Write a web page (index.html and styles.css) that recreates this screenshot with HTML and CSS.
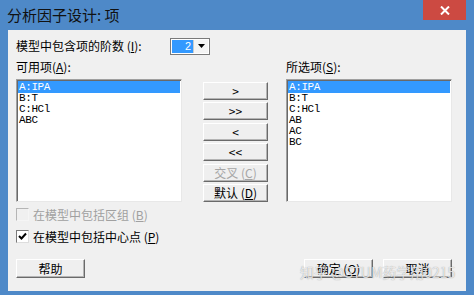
FILE: index.html
```html
<!DOCTYPE html>
<html>
<head>
	<title>分析因子设计: 项</title>
	<link rel="stylesheet" href="styles.css">
</head>
<body>
	<div class="ventana">
		<div class="titulo">
			<span class="titulo-texto">分析因子设计: 项</span>
			<div class="cerrar">
				<svg width="10" height="9" viewBox="0 0 10 9"><path d="M1 0.5 L9 8.5 M9 0.5 L1 8.5" stroke="#fff" stroke-width="2"/></svg>
			</div>
		</div>

		<div class="cliente">
			<div class="fila-orden">
				<span class="etiqueta-orden">模型中包含项的阶数 (<u>I</u>):</span>
				<div class="combo">
					<span class="combo-valor">2</span>
					<span class="combo-flecha"><svg width="7" height="4" viewBox="0 0 7 4"><path d="M0 0 H7 L3.5 4 Z" fill="#000"/></svg></span>
				</div>
			</div>

			<div class="listas">
				<div class="columna">
					<div class="rotulo">可用项(<u>A</u>):</div>
					<div class="lista">
						<div class="item sel">A:IPA</div>
						<div class="item">B:T</div>
						<div class="item">C:HCl</div>
						<div class="item">ABC</div>
					</div>
				</div>

				<div class="botones">
					<div class="boton">&gt;</div>
					<div class="boton">&gt;&gt;</div>
					<div class="boton">&lt;</div>
					<div class="boton">&lt;&lt;</div>
					<div class="boton apagado">交叉 (<u>C</u>)</div>
					<div class="boton">默认 (<u>D</u>)</div>
				</div>

				<div class="columna">
					<div class="rotulo">所选项(<u>S</u>):</div>
					<div class="lista">
						<div class="item sel">A:IPA</div>
						<div class="item">B:T</div>
						<div class="item">C:HCl</div>
						<div class="item">AB</div>
						<div class="item">AC</div>
						<div class="item">BC</div>
					</div>
				</div>
			</div>

			<div class="check apagado">
				<span class="caja"></span>
				<span>在模型中包括区组 (<u>B</u>)</span>
			</div>
			<div class="check segundo">
				<span class="caja">
					<svg width="9" height="9" viewBox="0 0 9 9"><path d="M1 4 L3.5 6.5 L8 1.5" stroke="#000" stroke-width="2" fill="none"/></svg>
				</span>
				<span>在模型中包括中心点 (<u>P</u>)</span>
			</div>

			<div class="pie">
				<div class="boton ancho">帮助</div>
				<div class="relleno"></div>
				<div class="boton ancho">确定 (<u>O</u>)</div>
				<div class="boton ancho">取消</div>
			</div>
		</div>

		<div class="marca">知乎 @STUM药学用0215</div>
	</div>
</body>
</html>
```

FILE: styles.css
```css
body{
	margin: 0;
	font-family: "Noto Sans CJK SC", "Liberation Sans", sans-serif;
}

.ventana{
	position: relative;
	width: 474px;
	height: 295px;
	background: #4e89c8;
	display: flex;
	flex-direction: column;
}

.titulo{
	height: 30px;
	display: flex;
	justify-content: space-between;
	align-items: flex-start;
}

.titulo-texto{
	font-size: 15px;
	line-height: 30px;
	margin-left: 7px;
	color: #111;
}

.cerrar{
	width: 43px;
	height: 20px;
	margin-right: 8px;
	background: #cc4a42;
	display: flex;
	align-items: center;
	justify-content: center;
}

.cliente{
	margin: 0 8px 4px 8px;
	flex: 1;
	background: #f0f0f0;
	padding: 8px 14px 0 8px;
	font-size: 12px;
	color: #000;
}

u{
	text-decoration: underline;
	text-underline-offset: 1px;
}

.fila-orden{
	display: flex;
	align-items: center;
	height: 16px;
}

.etiqueta-orden{
	width: 154px;
	line-height: 16px;
}

.combo{
	width: 36px;
	height: 13px;
	border: 1px solid #7a7a7a;
	background: #fff;
	display: flex;
	padding: 1px;
}

.combo-valor{
	width: 21px;
	background: #3399ff;
	color: #fff;
	font-family: "Liberation Sans", sans-serif;
	font-size: 11px;
	line-height: 13px;
	text-align: right;
	padding-right: 2px;
	box-sizing: border-box;
}

.combo-flecha{
	flex: 1;
	display: flex;
	align-items: center;
	justify-content: center;
	background: #f4f4f4;
	border-left: 1px solid #ccc;
}

.listas{
	display: flex;
	margin-top: 5px;
}

.columna{
	width: 166px;
	display: flex;
	flex-direction: column;
}

.rotulo{
	height: 16px;
	line-height: 16px;
	margin-bottom: 4px;
}

.lista{
	height: 123px;
	box-sizing: border-box;
	background: #fff;
	border: 1px solid;
	border-color: #a0a0a0 #e8e8e8 #e8e8e8 #a0a0a0;
	box-shadow: inset 1px 1px 0 #696969;
	padding: 1px 1px 0 1px;
}

.item{
	height: 11px;
	line-height: 11px;
	font-family: "Liberation Mono", monospace;
	font-size: 11px;
	padding-left: 1px;
	letter-spacing: -0.4px;
}

.item.sel{
	background: #3399ff;
	color: #fff;
	height: 12px;
	line-height: 12px;
}

.botones{
	width: 65px;
	margin: 23px 18px 0 21px;
	display: flex;
	flex-direction: column;
	gap: 2.4px;
}

.boton{
	height: 18px;
	box-sizing: border-box;
	background: #efefef;
	border: 1px solid;
	border-color: #fff #6a6a6a #6a6a6a #fff;
	box-shadow: inset -1px -1px 0 #b4b4b4;
	display: flex;
	align-items: center;
	justify-content: center;
	font-size: 12px;
	line-height: 16px;
}

.boton.apagado{
	color: #a6a6a6;
}

.check{
	display: flex;
	align-items: center;
	height: 16px;
	margin-top: 4px;
	gap: 4px;
}

.check.segundo{
	margin-top: 6px;
}

.check.apagado{
	color: #a0a0a0;
}

.caja{
	width: 11px;
	height: 11px;
	background: #fff;
	border: 1px solid;
	border-color: #7a7a7a #ddd #ddd #7a7a7a;
	display: flex;
	align-items: center;
	justify-content: center;
}

.check.apagado .caja{
	background: #f0f0f0;
	border-color: #b5b5b5 #f5f5f5 #f5f5f5 #b5b5b5;
}

.pie{
	display: flex;
	margin-top: 15px;
	gap: 10px;
}

.relleno{
	flex: 1;
}

.boton.ancho{
	width: 69px;
	height: 19px;
}

.marca{
	position: absolute;
	left: 300px;
	top: 262px;
	font-size: 14px;
	color: rgba(255,255,255,0.75);
	text-shadow: 0 0 1px rgba(80,80,80,0.6);
	white-space: nowrap;
	pointer-events: none;
}
```
